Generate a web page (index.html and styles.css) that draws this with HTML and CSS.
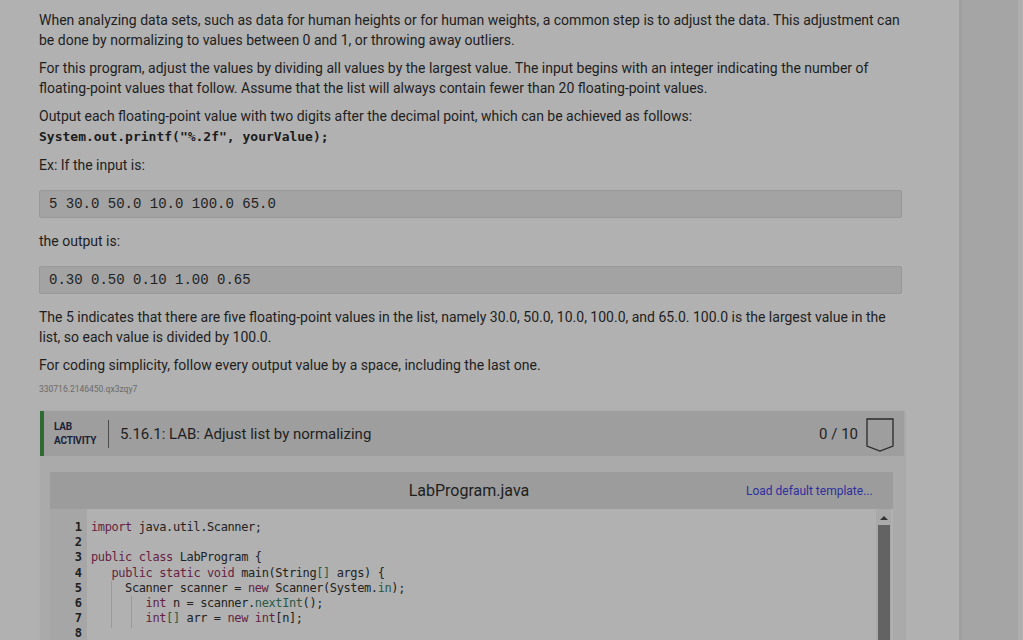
FILE: index.html
```html
<!DOCTYPE html>
<html>
<head>
<meta charset="utf-8">
<link rel="stylesheet" href="styles.css">
</head>
<body>
<div class="page">
  <main class="main">
    <div class="content">
      <p class="p">When analyzing data sets, such as data for human heights or for human weights, a common step is to adjust the data. This adjustment can be done by normalizing to values between 0 and 1, or throwing away outliers.</p>
      <p class="p">For this program, adjust the values by dividing all values by the largest value. The input begins with an integer indicating the number of floating-point values that follow. Assume that the list will always contain fewer than 20 floating-point values.</p>
      <p class="p">Output each floating-point value with two digits after the decimal point, which can be achieved as follows:<br><code class="inline-code">System.out.printf("%.2f", yourValue);</code></p>
      <p class="p">Ex: If the input is:</p>
      <div class="pre pre-1">5 30.0 50.0 10.0 100.0 65.0</div>
      <p class="p p-out">the output is:</p>
      <div class="pre pre-2">0.30 0.50 0.10 1.00 0.65</div>
      <p class="p p-after">The 5 indicates that there are five floating-point values in the list, namely 30.0, 50.0, 10.0, 100.0, and 65.0. 100.0 is the largest value in the list, so each value is divided by 100.0.</p>
      <p class="p">For coding simplicity, follow every output value by a space, including the last one.</p>
      <div class="res-id">330716.2146450.qx3zqy7</div>

      <section class="lab">
        <header class="lab-head">
          <div class="lab-label"><span>LAB</span><span>ACTIVITY</span></div>
          <div class="lab-sep"></div>
          <div class="lab-title">5.16.1: LAB: Adjust list by normalizing</div>
          <div class="lab-score">0 / 10</div>
          <svg class="lab-badge" width="28" height="34" viewBox="0 0 28 34">
            <path d="M1 1 H27 V28 L14 33 L1 28 Z" fill="none" stroke="#2a2a2a" stroke-width="1.3"/>
          </svg>
        </header>
        <div class="lab-body">
          <div class="editor">
            <div class="editor-head">
              <div class="file-name">LabProgram.java</div>
              <div class="load-link">Load default template...</div>
            </div>
            <div class="editor-main">
              <div class="gutter">
                <div>1</div><div>2</div><div>3</div><div>4</div><div>5</div><div>6</div><div>7</div><div>8</div>
              </div>
              <div class="code">
                <div class="ln"><span class="kw">import</span> java.util.Scanner;</div>
                <div class="ln"> </div>
                <div class="ln"><span class="kw">public class</span> LabProgram {</div>
                <div class="ln">   <span class="kw">public static void</span> main(String<span class="gr">[]</span> args) {</div>
                <div class="ln">     Scanner scanner = <span class="kw">new</span> Scanner(System.<span class="gr">in</span>);</div>
                <div class="ln">        <span class="kw">int</span> n = scanner.<span class="gr">nextInt</span>();</div>
                <div class="ln">        <span class="kw">int</span><span class="gr">[]</span> arr = <span class="kw">new</span> <span class="kw">int</span>[n];</div>
                <div class="ln"> </div>
                <div class="guide guide-1"></div>
                <div class="guide guide-2"></div>
              </div>
              <div class="scrollbar">
                <div class="sb-arrow"></div>
                <div class="sb-thumb"></div>
              </div>
            </div>
          </div>
        </div>
      </section>
    </div>
  </main>
  <aside class="side"></aside>
  <div class="edge"></div>
</div>
</body>
</html>
```

FILE: styles.css
```css
html, body {
  margin: 0;
  padding: 0;
  height: 640px;
  overflow: hidden;
  background: #b1b1b1;
}

.page {
  display: flex;
  height: 640px;
  overflow: hidden;
  font-family: Roboto, "Liberation Sans", sans-serif;
  color: #1e1e1e;
}

.main {
  width: 959px;
  flex: none;
  background: #b1b1b1;
}

.side {
  width: 59px;
  flex: none;
  background: #a5a5a5;
  border-left: 3px solid #9f9f9f;
  box-sizing: border-box;
}

.edge {
  flex: 1;
  background: #adadad;
}

.content {
  padding: 10px 0 0 39px;
  width: 864px;
}

.p {
  margin: 0 0 8px 0;
  font-size: 14px;
  line-height: 20px;
  width: 862px;
}

.inline-code {
  font-family: "DejaVu Sans Mono", monospace;
  font-size: 13px;
  font-weight: 600;
  color: #1c1c1c;
}

.pre {
  box-sizing: border-box;
  width: 863px;
  height: 28px;
  padding: 0 9px;
  border: 1px solid #999999;
  border-radius: 2px;
  background: #a3a3a3;
  font-family: "Liberation Mono", monospace;
  font-size: 14px;
  line-height: 26px;
  color: #222;
}

.pre-1 {
  margin: 15px 0 0 0;
}

.p-out {
  margin-top: 13px;
}

.pre-2 {
  margin: 15px 0 0 0;
}

.p-after {
  margin-top: 13px;
}

.res-id {
  font-size: 8.5px;
  color: #6a6a6a;
  line-height: 12px;
  margin-top: 7px;
}

.lab {
  margin-top: 16px;
  width: 864px;
  margin-left: 1px;
  background: #aaaaaa;
  box-shadow: 1px 0 2px rgba(0,0,0,0.08);
}

.lab-head {
  display: flex;
  align-items: center;
  height: 45px;
  background: #9e9e9e;
  border-left: 4px solid #2d6a34;
  box-sizing: border-box;
  padding: 0 10px 0 10px;
}

.lab-label {
  display: flex;
  flex-direction: column;
  font-size: 10px;
  font-weight: 700;
  line-height: 14px;
  color: #1b2238;
  letter-spacing: -0.2px;
  width: 52px;
}

.lab-sep {
  width: 1px;
  height: 28px;
  background: #4a4a4a;
  margin: 0 11px 0 2px;
}

.lab-title {
  font-size: 15px;
  color: #1e1e1e;
  flex: 1;
}

.lab-score {
  font-size: 15px;
  color: #1e1e1e;
  margin-right: 8px;
}

.lab-badge {
  display: block;
  margin-top: 2px;
}

.lab-body {
  padding: 16px 11px 0 10px;
}

.editor {
  background: #b1b1b1;
}

.editor-head {
  display: flex;
  align-items: center;
  height: 37px;
  background: #9c9c9c;
  padding: 0 16px 0 0;
}

.file-name {
  flex: 1;
  text-align: center;
  font-size: 16px;
  color: #1e1e1e;
  padding-left: 142px;
}

.load-link {
  font-size: 12px;
  color: #2f2f9c;
  width: 131px;
}

.editor-main {
  display: flex;
  height: 140px;
}

.gutter {
  width: 37px;
  flex: none;
  box-sizing: border-box;
  background: #a6a6a6;
  padding: 11px 5px 0 0;
  text-align: right;
  font-family: "DejaVu Sans Mono", monospace;
  font-size: 12px;
  font-weight: 700;
  line-height: 15.2px;
  color: #202020;
}

.code {
  flex: 1;
  position: relative;
  padding: 11px 0 0 4px;
  font-family: "DejaVu Sans Mono", monospace;
  font-size: 12px;
  letter-spacing: -0.4px;
  line-height: 15.2px;
  color: #222222;
}

.ln {
  white-space: pre;
  height: 15.2px;
}

.kw {
  color: #651f42;
}

.gr {
  color: #285a47;
}

.guide {
  position: absolute;
  width: 1px;
  background: #9a9a9a;
}

.guide-1 {
  left: 24px;
  top: 72px;
  height: 47px;
}

.guide-2 {
  left: 44px;
  top: 87px;
  height: 32px;
}

.scrollbar {
  width: 15px;
  flex: none;
  background: #a9a9a9;
  margin-right: 2px;
  display: flex;
  flex-direction: column;
  align-items: center;
}

.sb-arrow {
  width: 0;
  height: 0;
  border-left: 4px solid transparent;
  border-right: 4px solid transparent;
  border-bottom: 4px solid #333;
  margin: 7px 0 5px 0;
}

.sb-thumb {
  width: 12px;
  flex: 1;
  background: #636363;
}
```
